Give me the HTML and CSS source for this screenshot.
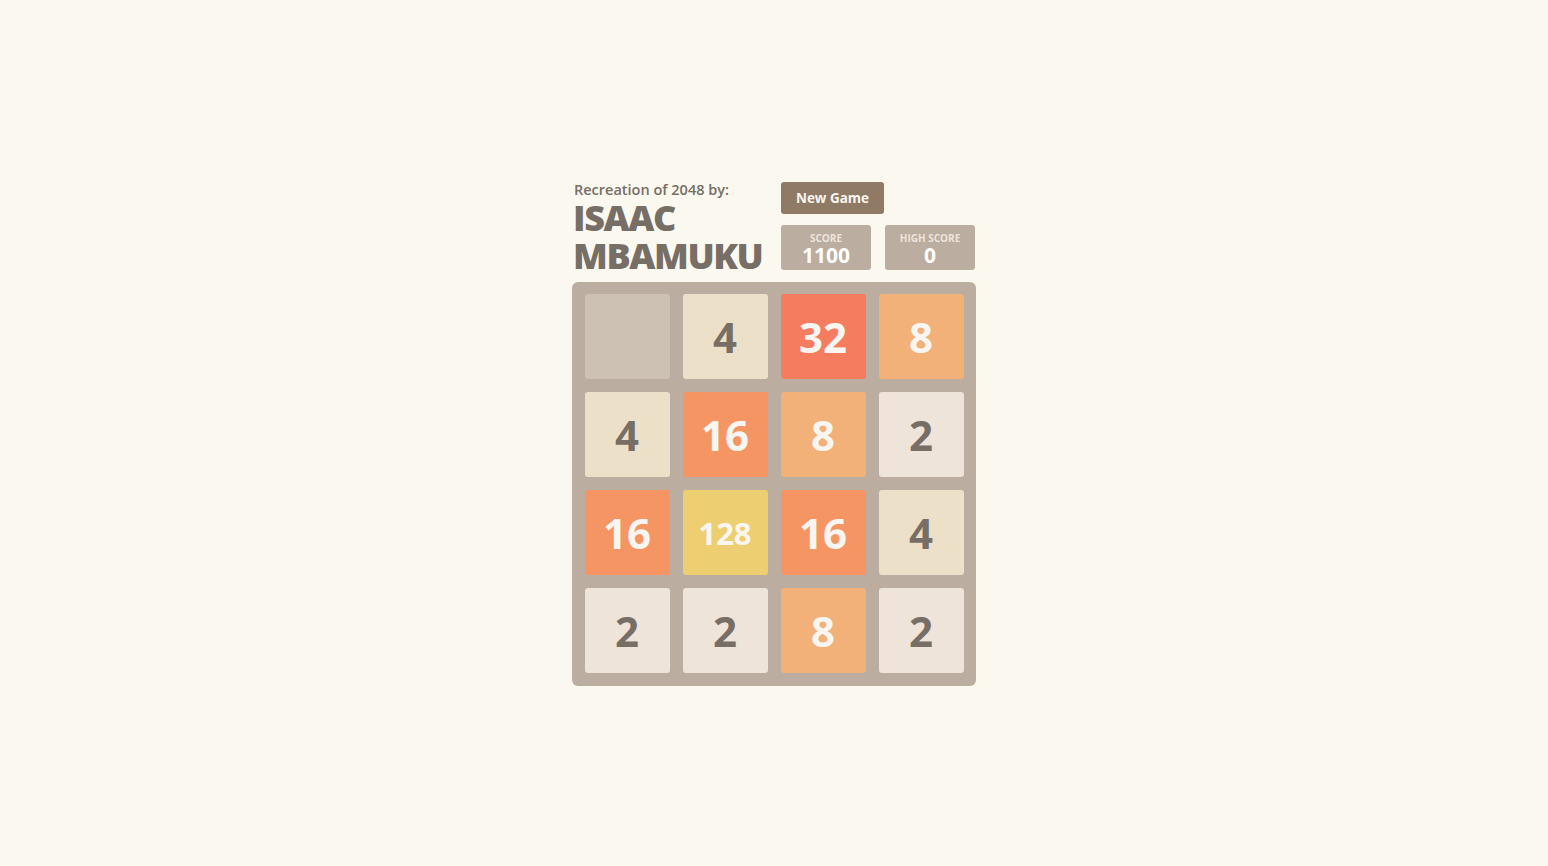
FILE: index.html
```html
<!DOCTYPE html>
<html>
<head>
<meta charset="utf-8">
<link rel="stylesheet" href="styles.css">
</head>
<body>
<div class="game">
  <div class="header">
    <div class="title-block">
      <div class="subtitle">Recreation of 2048 by:</div>
      <div class="title">ISAAC<br>MBAMUKU</div>
    </div>
    <div class="controls">
      <button class="new-game">New Game</button>
      <div class="scores">
        <div class="score-box"><div class="label">SCORE</div><div class="value">1100</div></div>
        <div class="score-box"><div class="label">HIGH SCORE</div><div class="value">0</div></div>
      </div>
    </div>
  </div>
  <div class="board">
    <div class="tile t0"></div>
    <div class="tile t4">4</div>
    <div class="tile t32">32</div>
    <div class="tile t8">8</div>
    <div class="tile t4">4</div>
    <div class="tile t16">16</div>
    <div class="tile t8">8</div>
    <div class="tile t2">2</div>
    <div class="tile t16">16</div>
    <div class="tile t128">128</div>
    <div class="tile t16">16</div>
    <div class="tile t4">4</div>
    <div class="tile t2">2</div>
    <div class="tile t2">2</div>
    <div class="tile t8">8</div>
    <div class="tile t2">2</div>
  </div>
</div>
</body>
</html>
```

FILE: styles.css
```css
html, body {
  margin: 0;
  height: 100%;
}
body {
  background: #faf8ef;
  font-family: "Open Sans", "Noto Sans", sans-serif;
  color: #776e65;
  display: flex;
  align-items: center;
  justify-content: center;
}
.game {
  width: 404px;
  margin-top: 2px;
}
.header {
  display: flex;
  justify-content: space-between;
  height: 88px;
  margin-bottom: 12px;
}
.title-block {
  padding-left: 1px;
}
.subtitle {
  font-size: 14.5px;
  font-weight: 600;
  line-height: 16px;
  padding-left: 1px;
}
.title {
  font-size: 36px;
  font-weight: 800;
  line-height: 38px;
  margin-top: 1px;
  letter-spacing: -1.4px;
}
.controls {
  width: 195px;
  display: flex;
  flex-direction: column;
  gap: 11px;
}
.new-game {
  width: 103px;
  height: 32px;
  background: #8f7a66;
  color: #f9f6f2;
  border: none;
  border-radius: 3px;
  font-family: inherit;
  font-weight: 700;
  font-size: 13.5px;
  padding: 0;
}
.scores {
  display: flex;
  gap: 14px;
}
.score-box {
  width: 90px;
  height: 45px;
  background: #bbada0;
  border-radius: 3px;
  text-align: center;
  box-sizing: border-box;
  padding-top: 6px;
}
.label {
  font-size: 10px;
  font-weight: 700;
  color: #eee4da;
  line-height: 14px;
}
.value {
  font-size: 21px;
  font-weight: 700;
  color: #ffffff;
  line-height: 21px;
}
.board {
  background: #bbada0;
  border-radius: 6px;
  padding: 12px 12.5px 13px;
  display: grid;
  grid-template-columns: repeat(4, 85px);
  grid-auto-rows: 85px;
  gap: 13px 13px;
}
.tile {
  border-radius: 3px;
  display: flex;
  align-items: center;
  justify-content: center;
  font-weight: 700;
  font-size: 42px;
}
.t0 { background: #cdc1b4; }
.t2 { background: #eee4da; color: #776e65; }
.t4 { background: #ede0c8; color: #776e65; }
.t8 { background: #f2b179; color: #f9f6f2; }
.t16 { background: #f59563; color: #f9f6f2; }
.t32 { background: #f67c5f; color: #f9f6f2; }
.t128 { background: #edcf72; color: #f9f6f2; font-size: 31px; }
```
